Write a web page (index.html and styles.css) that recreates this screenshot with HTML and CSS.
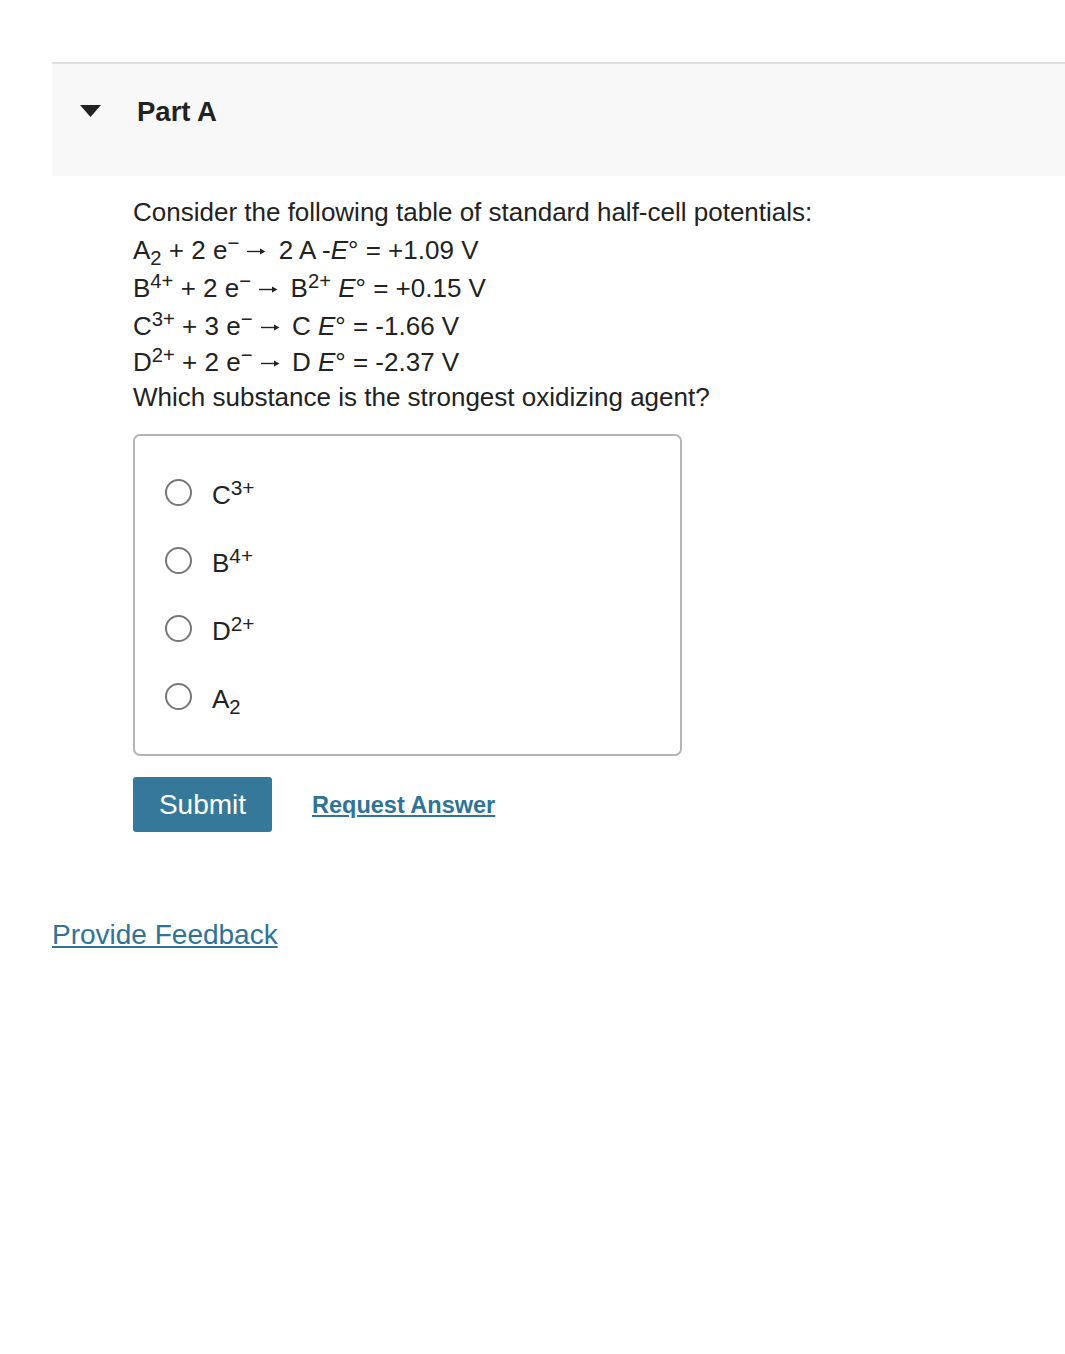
FILE: index.html
```html
<!DOCTYPE html>
<html>
<head>
<meta charset="utf-8">
<link rel="stylesheet" href="styles.css">
</head>
<body>
<div class="part">
  <div class="part-head">
    <svg class="caret" width="21" height="12" viewBox="0 0 21 12"><path d="M0 0 L21 0 L10.5 12 Z" fill="#222"/></svg>
    <h2 class="part-title">Part A</h2>
  </div>
  <div class="part-body">
    <div class="question">
      <div class="q-line">Consider the following table of standard half-cell potentials:</div>
      <div class="q-line">A<sub>2</sub> + 2 e<sup>−</sup> <svg class="arr" width="20" height="9" viewBox="0 0 20 9"><path d="M1 4.5 H16" stroke="#222" stroke-width="1.4"/><path d="M14 1.5 L19.5 4.5 L14 7.5 Z" fill="#222"/></svg> 2 A -<i>E</i>° = +1.09 V</div>
      <div class="q-line">B<sup>4+</sup> + 2 e<sup>−</sup> <svg class="arr" width="20" height="9" viewBox="0 0 20 9"><path d="M1 4.5 H16" stroke="#222" stroke-width="1.4"/><path d="M14 1.5 L19.5 4.5 L14 7.5 Z" fill="#222"/></svg> B<sup>2+</sup> <i>E</i>° = +0.15 V</div>
      <div class="q-line">C<sup>3+</sup> + 3 e<sup>−</sup> <svg class="arr" width="20" height="9" viewBox="0 0 20 9"><path d="M1 4.5 H16" stroke="#222" stroke-width="1.4"/><path d="M14 1.5 L19.5 4.5 L14 7.5 Z" fill="#222"/></svg> C <i>E</i>° = -1.66 V</div>
      <div class="q-line">D<sup>2+</sup> + 2 e<sup>−</sup> <svg class="arr" width="20" height="9" viewBox="0 0 20 9"><path d="M1 4.5 H16" stroke="#222" stroke-width="1.4"/><path d="M14 1.5 L19.5 4.5 L14 7.5 Z" fill="#222"/></svg> D <i>E</i>° = -2.37 V</div>
      <div class="q-line">Which substance is the strongest oxidizing agent?</div>
    </div>
    <div class="choices">
      <label class="choice"><span class="radio"></span><span class="opt">C<sup>3+</sup></span></label>
      <label class="choice"><span class="radio"></span><span class="opt">B<sup>4+</sup></span></label>
      <label class="choice"><span class="radio"></span><span class="opt">D<sup>2+</sup></span></label>
      <label class="choice"><span class="radio"></span><span class="opt">A<sub>2</sub></span></label>
    </div>
    <div class="actions">
      <button class="submit">Submit</button>
      <a class="request" href="#">Request Answer</a>
    </div>
  </div>
  <a class="feedback" href="#">Provide Feedback</a>
</div>
</body>
</html>
```

FILE: styles.css
```css
html, body {
  margin: 0;
  padding: 0;
  background: #fff;
}
body {
  font-family: "Liberation Sans", Arial, Helvetica, sans-serif;
  color: #222;
}
.part {
  margin-left: 52px;
  padding-top: 62px;
}
.part-head {
  border-top: 2px solid #e1e1e1;
  background: #f8f8f8;
  height: 114px;
  display: flex;
  align-items: flex-start;
  box-sizing: border-box;
  padding-top: 32px;
}
.caret {
  margin-left: 28px;
  margin-top: 9px;
  flex: none;
}
.part-title {
  margin: 0 0 0 36px;
  font-size: 27.5px;
  line-height: 32px;
  font-weight: bold;
  color: #222;
}
.part-body {
  padding-left: 81px;
  padding-top: 18px;
}
.question {
  font-size: 26px;
  line-height: 37px;
  color: #222;
}
.q-line:nth-child(2) { margin-top: 1px; }
.q-line:nth-child(3) { margin-top: 1px; }
.q-line:nth-child(4) { margin-top: 1px; }
.q-line:nth-child(5) { margin-top: -1px; }
.q-line:nth-child(6) { margin-top: -2px; }
.q-line sup, .q-line sub, .opt sup, .opt sub {
  font-size: 0.78em;
  line-height: 0;
}
.q-line sup, .opt sup {
  vertical-align: 0.42em;
}
.q-line sub, .opt sub {
  vertical-align: -0.28em;
}
.arr {
  vertical-align: 3px;
  margin: 0 5px 0 0;
}
.choices {
  margin-top: 18px;
  width: 549px;
  box-sizing: border-box;
  border: 2px solid #b5b5b5;
  border-radius: 7px;
  padding: 22px 0 24px 30px;
}
.choice {
  height: 68px;
  display: flex;
  align-items: center;
}
.radio {
  width: 23px;
  height: 23px;
  border: 2px solid #777;
  border-radius: 50%;
  flex: none;
}
.opt {
  margin-left: 20px;
  font-size: 26px;
  line-height: 30px;
  color: #222;
  padding-top: 6px;
}
.opt sup {
  font-size: 0.8em;
}
.actions {
  margin-top: 21px;
  display: flex;
  align-items: center;
}
.submit {
  width: 139px;
  height: 55px;
  border: none;
  border-radius: 3px;
  background: #367899;
  color: #fff;
  font-family: "Liberation Sans", Arial, sans-serif;
  font-size: 28px;
  padding: 0;
}
.request {
  margin-left: 40px;
  font-size: 23.5px;
  font-weight: bold;
  color: #2f7398;
  text-decoration: underline;
  padding-top: 1px;
}
.feedback {
  display: inline-block;
  margin-top: 87px;
  font-size: 28px;
  line-height: 32px;
  color: #2f7398;
  text-decoration: underline;
}
```
